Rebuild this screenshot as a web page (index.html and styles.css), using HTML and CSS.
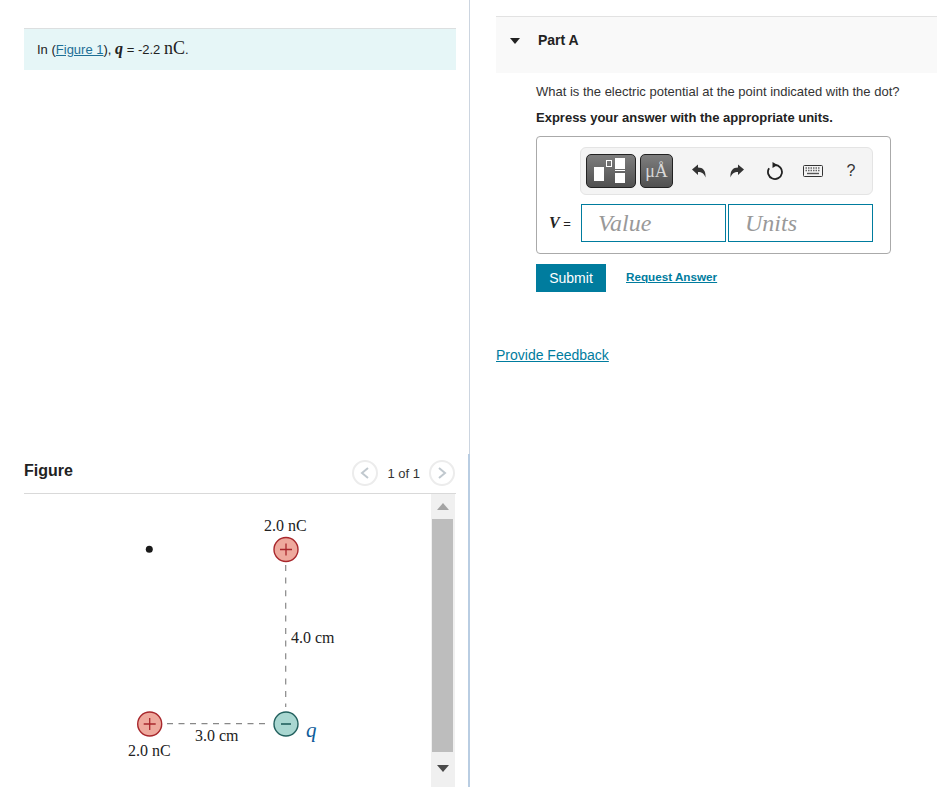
FILE: index.html
```html
<!DOCTYPE html>
<html lang="en">
<head>
  <meta charset="UTF-8">
  <title>Part A</title>
  <link rel="stylesheet" href="styles.css">
</head>
<body>
  <div class="page">
    <div class="left">
      <div class="intro">In (<a href="#">Figure 1</a>), <i class="math">q</i> = -2.2 <span class="unit">nC</span>.</div>

      <div class="figure-head">
        <h2>Figure</h2>
        <div class="pager">
          <span class="round-btn">
            <svg width="10" height="14" viewBox="0 0 10 14"><path d="M8 2 L2 7 L8 12" fill="none" stroke="#c0c8ce" stroke-width="2"/></svg>
          </span>
          <span class="count">1 of 1</span>
          <span class="round-btn">
            <svg width="10" height="14" viewBox="0 0 10 14"><path d="M2 2 L8 7 L2 12" fill="none" stroke="#c0c8ce" stroke-width="2"/></svg>
          </span>
        </div>
      </div>

      <div class="figure-body">
        <svg class="diagram" width="407" height="293" viewBox="24 494 407 293">
          <circle cx="149.3" cy="549.3" r="3.5" fill="#1a1a1a"/>
          <path class="dash" d="M285.7 565 V707" stroke-dasharray="6 6.6"/>
          <path class="dash" d="M167 723.7 H270" stroke-dasharray="6 5.5"/>

          <circle class="pos" cx="286" cy="549.5" r="12"/>
          <path class="pos-sign" d="M280 549.5 H292 M286 543.5 V555.5"/>
          <circle class="pos" cx="149.7" cy="724" r="12"/>
          <path class="pos-sign" d="M143.7 724 H155.7 M149.7 718 V730"/>
          <circle class="neg" cx="286" cy="724" r="12"/>
          <path class="neg-sign" d="M281 724 H291"/>

          <text class="label" x="264" y="531">2.0 nC</text>
          <text class="label" x="291" y="643">4.0 cm</text>
          <text class="label" x="195" y="741">3.0 cm</text>
          <text class="label" x="128" y="755.5">2.0 nC</text>
          <text class="label-q" x="306" y="737">q</text>
        </svg>
        <div class="scrollbar">
          <span class="arrow-up"></span>
          <span class="thumb"></span>
          <span class="arrow-down"></span>
        </div>
      </div>
    </div>

    <div class="rule">
      <span class="rule-top"></span>
      <span class="rule-bottom"></span>
    </div>

    <div class="right">
      <div class="part-head">
        <span class="caret"></span>
        <span class="part-title">Part A</span>
      </div>

      <div class="part-body">
        <p class="question">What is the electric potential at the point indicated with the dot?</p>
        <p class="instruction">Express your answer with the appropriate units.</p>

        <div class="answer-box">
          <div class="toolbar">
            <span class="tool-btn tool-template">
              <svg width="34" height="26" viewBox="0 0 34 26">
                <rect x="0" y="9" width="10" height="14" fill="#fff"/>
                <rect x="12.5" y="2.5" width="5" height="6" fill="none" stroke="#fff"/>
                <rect x="21" y="0" width="10" height="11" fill="#fff"/>
                <rect x="21" y="12" width="10" height="1" fill="#fff"/>
                <rect x="21" y="15" width="10" height="10" fill="#fff"/>
              </svg>
            </span>
            <span class="tool-btn tool-units">μÅ</span>
            <span class="tool-icons">
              <span class="tool-icon">
                <svg width="16" height="14" viewBox="0 0 16 14"><path d="M1 5.5 L7 0.5 V3.5 C12 3.5 15 6.5 14.5 13.5 C13 9.5 11 8 7 8 V11 Z" fill="#333"/></svg>
              </span>
              <span class="tool-icon">
                <svg width="16" height="14" viewBox="0 0 16 14"><path d="M15 5.5 L9 0.5 V3.5 C4 3.5 1 6.5 1.5 13.5 C3 9.5 5 8 9 8 V11 Z" fill="#333"/></svg>
              </span>
              <span class="tool-icon">
                <svg width="18" height="18" viewBox="0 0 18 18"><path d="M9 3 A7 7 0 1 1 3.1 6.2" fill="none" stroke="#222" stroke-width="1.8"/><path d="M6.5 0 L11.5 3 L6.5 6 Z" fill="#222"/></svg>
              </span>
              <span class="tool-icon">
                <svg width="20" height="12" viewBox="0 0 20 12"><rect x="0.5" y="0.5" width="19" height="11" rx="1" fill="#f4f4f4" stroke="#333"/><path d="M2.5 3 H17.5 M2.5 5.5 H17.5" stroke="#666" stroke-width="1.3" stroke-dasharray="1.5 1"/><path d="M4 8.5 H16" stroke="#555" stroke-width="1.4"/></svg>
              </span>
              <span class="tool-icon help">?</span>
            </span>
          </div>
          <div class="answer-row">
            <label class="var"><i>V</i> =</label>
            <input class="field" type="text" placeholder="Value">
            <input class="field" type="text" placeholder="Units">
          </div>
        </div>

        <div class="actions">
          <button class="submit">Submit</button>
          <a class="request" href="#">Request Answer</a>
        </div>
      </div>

      <a class="feedback" href="#">Provide Feedback</a>
    </div>
  </div>
</body>
</html>
```

FILE: styles.css
```css
html, body {
  margin: 0;
  padding: 0;
  background: #fff;
}
body {
  font-family: "Liberation Sans", Arial, sans-serif;
  font-size: 13px;
  color: #222;
}
a {
  color: #007c9e;
}
.page {
  display: flex;
  height: 787px;
  overflow: hidden;
}

/* left column */
.left {
  width: 468px;
  box-sizing: border-box;
  padding: 28px 12px 0 24px;
  flex: none;
}
.intro {
  height: 42px;
  box-sizing: border-box;
  border-top: 1px solid #dcdfe0;
  background: #e6f6f7;
  padding-left: 13px;
  line-height: 38px;
}
.intro a {
  color: #1d6f96;
}
.math {
  font-family: "Liberation Serif", serif;
  font-size: 16px;
  font-weight: bold;
}
.unit {
  font-family: "Liberation Serif", serif;
  font-size: 18px;
}
.figure-head {
  display: flex;
  align-items: center;
  justify-content: space-between;
  height: 36px;
  margin-top: 388px;
  border-bottom: 1px solid #d9d9d9;
  box-sizing: border-box;
  padding-bottom: 9px;
}
.figure-head h2 {
  margin: 0;
  font-size: 16px;
  color: #222;
}
.pager {
  display: flex;
  align-items: center;
  gap: 9px;
  margin: 4px 1px 0 0;
}
.round-btn {
  display: flex;
  align-items: center;
  justify-content: center;
  width: 22px;
  height: 22px;
  border: 2px solid #ececec;
  border-radius: 50%;
}
.count {
  color: #333;
}
.figure-body {
  display: flex;
  width: 431px;
  height: 293px;
}
.diagram {
  flex: none;
  display: block;
}
.dash {
  stroke: #888;
  stroke-width: 1.2;
  fill: none;
}
.pos {
  fill: #eea99d;
  stroke: #a8272c;
  stroke-width: 1.4;
}
.pos-sign {
  stroke: #a8272c;
  stroke-width: 1.3;
  fill: none;
}
.neg {
  fill: #a9d7d1;
  stroke: #22605e;
  stroke-width: 1.4;
}
.neg-sign {
  stroke: #22605e;
  stroke-width: 1.6;
  fill: none;
}
.label {
  font-family: "Liberation Serif", serif;
  font-size: 16px;
  fill: #222;
}
.label-q {
  font-family: "Liberation Serif", serif;
  font-size: 21px;
  font-style: italic;
  fill: #0f5c9a;
}
.scrollbar {
  width: 24px;
  background: #f0f0f0;
  display: flex;
  flex-direction: column;
  align-items: center;
  padding: 9px 2px 0 1px;
  box-sizing: border-box;
}
.arrow-up {
  width: 0;
  height: 0;
  border-left: 6px solid transparent;
  border-right: 6px solid transparent;
  border-bottom: 7px solid #a3a3a3;
}
.thumb {
  width: 21px;
  height: 233px;
  margin: 9px 0 13px;
  flex: none;
  background: #bdbdbd;
}
.arrow-down {
  width: 0;
  height: 0;
  border-left: 6px solid transparent;
  border-right: 6px solid transparent;
  border-top: 7px solid #4a4a4a;
}

/* divider between the columns */
.rule {
  width: 2px;
  flex: none;
  display: flex;
  flex-direction: column;
}
.rule-top {
  width: 1px;
  height: 454px;
  margin-left: 1px;
  background: #ccd5e0;
}
.rule-bottom {
  flex: 1;
  background: #b9cde2;
}

/* right column */
.right {
  flex: 1;
  padding: 16px 0 0 26px;
  min-width: 0;
}
.part-head {
  display: flex;
  height: 57px;
  box-sizing: border-box;
  border-top: 1px solid #e2e2e2;
  background: #f9f9f9;
  padding: 15px 0 0 14px;
  font-size: 14px;
}
.caret {
  width: 0;
  height: 0;
  margin-top: 6px;
  border-left: 5.5px solid transparent;
  border-right: 5.5px solid transparent;
  border-top: 6px solid #222;
}
.part-title {
  margin-left: 18px;
  font-weight: bold;
  color: #222;
}
.part-body {
  padding: 10px 0 0 40px;
}
.question {
  margin: 0;
  line-height: 17px;
  color: #333;
}
.instruction {
  margin: 9px 0 0;
  line-height: 17px;
  font-weight: bold;
}
.answer-box {
  width: 355px;
  height: 118px;
  box-sizing: border-box;
  margin-top: 10px;
  padding: 10px 17px 0 43px;
  border: 1px solid #aaa;
  border-radius: 4px;
}
.toolbar {
  display: flex;
  align-items: center;
  height: 48px;
  box-sizing: border-box;
  padding-left: 5px;
  gap: 4px;
  background: #f4f4f4;
  border: 1px solid #e4e4e4;
  border-radius: 6px;
}
.tool-btn {
  display: flex;
  align-items: center;
  justify-content: center;
  height: 34px;
  box-sizing: border-box;
  border: 1px solid #222;
  border-radius: 5px;
  background: linear-gradient(#7e7e7e, #515151);
}
.tool-template {
  width: 50px;
}
.tool-units {
  width: 33px;
  font-family: "Liberation Serif", serif;
  font-size: 18px;
  color: #d8d8d8;
}
.tool-icons {
  display: flex;
  align-items: center;
  margin-left: 3px;
}
.tool-icon {
  display: flex;
  justify-content: center;
  width: 38px;
}
.help {
  font-size: 16px;
  color: #333;
}
.answer-row {
  display: flex;
  align-items: center;
  gap: 2px;
  margin-top: 9px;
  margin-left: -32px;
}
.var {
  width: 32px;
  padding-left: 1px;
  box-sizing: border-box;
}
.var i {
  font-family: "Liberation Serif", serif;
  font-size: 16px;
  font-weight: bold;
}
.field {
  width: 145px;
  height: 38px;
  box-sizing: border-box;
  padding: 0 0 0 16px;
  border: 1px solid #007c9e;
  border-radius: 0;
  background: #fff;
  font-family: "Liberation Serif", serif;
  font-style: italic;
  font-size: 24px;
  outline: none;
}
.field::placeholder {
  color: #999;
  opacity: 1;
}
.actions {
  display: flex;
  align-items: flex-start;
  margin-top: 10px;
}
.submit {
  width: 70px;
  height: 28px;
  border: none;
  background: #007c9e;
  color: #fff;
  font-family: "Liberation Sans", sans-serif;
  font-size: 14px;
}
.request {
  margin: 6px 0 0 20px;
  font-size: 11.7px;
  font-weight: bold;
}
.feedback {
  display: inline-block;
  margin-top: 55px;
  font-size: 14px;
}
```
